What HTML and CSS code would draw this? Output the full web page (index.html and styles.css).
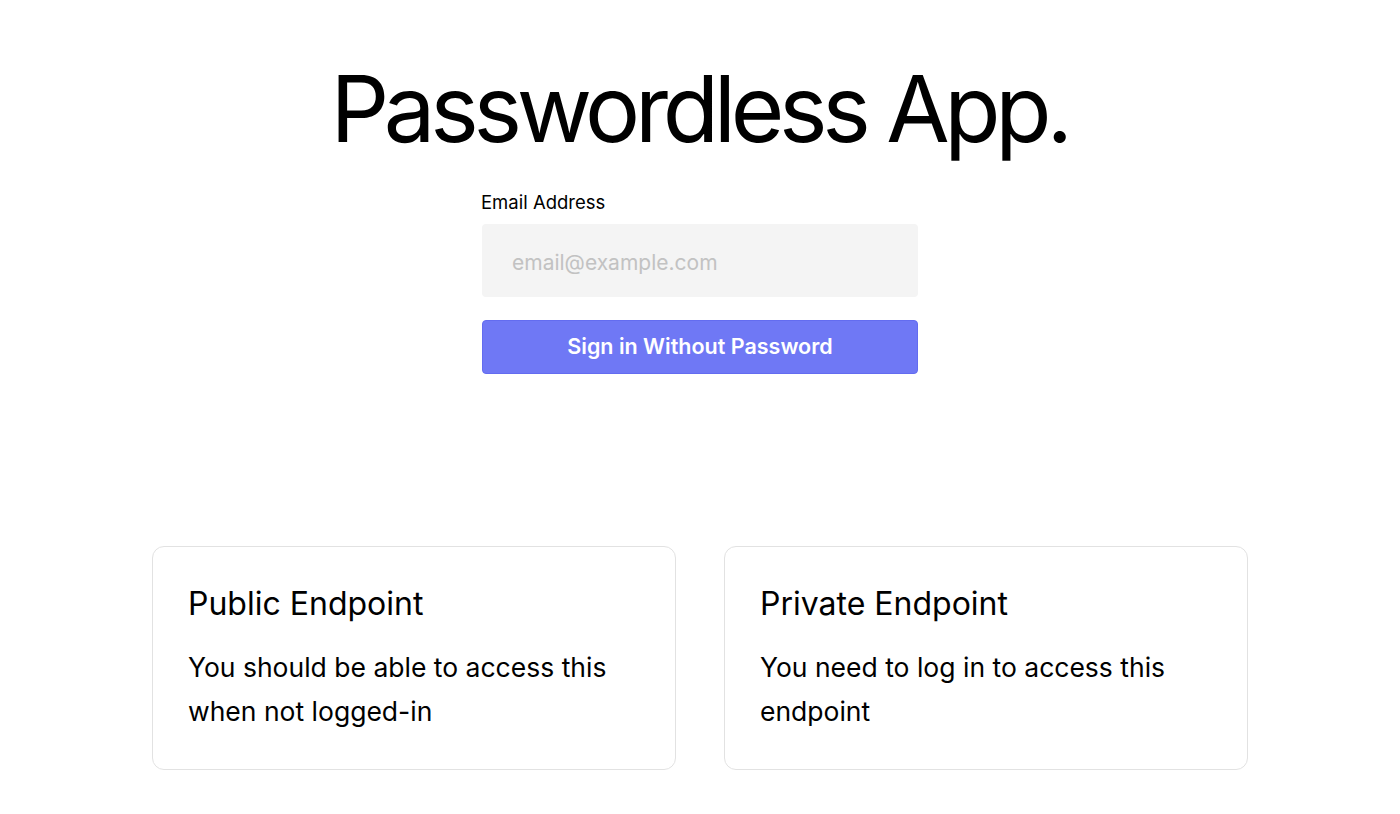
FILE: index.html
```html
<!DOCTYPE html>
<html lang="en">
<head>
<meta charset="utf-8">
<title>Passwordless App.</title>
<link rel="stylesheet" href="styles.css">
</head>
<body>
<main class="page">
  <h1 class="title">Passwordless App.</h1>
  <form class="login">
    <label class="label" for="email">Email Address</label>
    <input class="input" id="email" type="email" placeholder="email@example.com">
    <button class="button" type="button">Sign in Without Password</button>
  </form>
  <section class="cards">
    <div class="card">
      <h2 class="card-title">Public Endpoint</h2>
      <p class="card-text">You should be able to access this when not logged-in</p>
    </div>
    <div class="card">
      <h2 class="card-title">Private Endpoint</h2>
      <p class="card-text">You need to log in to access this endpoint</p>
    </div>
  </section>
</main>
</body>
</html>
```

FILE: styles.css
```css
* { box-sizing: border-box; }
html, body { margin: 0; padding: 0; background: #ffffff; }
body {
  font-family: Inter, "Noto Sans", "Liberation Sans", sans-serif;
  color: #000;
}
.page {
  display: flex;
  flex-direction: column;
  align-items: center;
  padding-top: 54px;
}
.title {
  margin: 0;
  font-size: 92px;
  font-weight: 400;
  line-height: 110px;
  letter-spacing: -5.3px;
  padding-right: 2px;
}
.login {
  width: 436px;
  display: flex;
  flex-direction: column;
  margin-top: 26px;
}
.label {
  font-size: 18.5px;
  line-height: 24px;
  margin-bottom: 10px;
  margin-left: -1px;
}
.input {
  height: 73px;
  border: none;
  background: #f4f4f4;
  border-radius: 4px;
  padding: 4px 30px 0;
  font-family: inherit;
  font-size: 21px;
  color: #000;
  outline: none;
}
.input::placeholder { color: #c2c2c2; }
.button {
  margin-top: 23px;
  height: 54px;
  background: #6f78f5;
  border: 1px solid #636cf0;
  border-radius: 4px;
  color: #fff;
  font-family: inherit;
  font-size: 21.5px;
  font-weight: 600;
  padding: 0;
  padding-bottom: 2px;
}
.cards {
  margin-top: 172px;
  width: 1096px;
  display: grid;
  grid-template-columns: 1fr 1fr;
  gap: 48px;
}
.card {
  height: 224px;
  border: 1px solid #e2e2e2;
  border-radius: 12px;
  padding: 37px 35px;
}
.card-title {
  margin: 0;
  font-size: 32px;
  font-weight: 400;
  line-height: 40px;
}
.card-text {
  margin: 21px 0 0;
  font-size: 26.5px;
  line-height: 44px;
}
```
